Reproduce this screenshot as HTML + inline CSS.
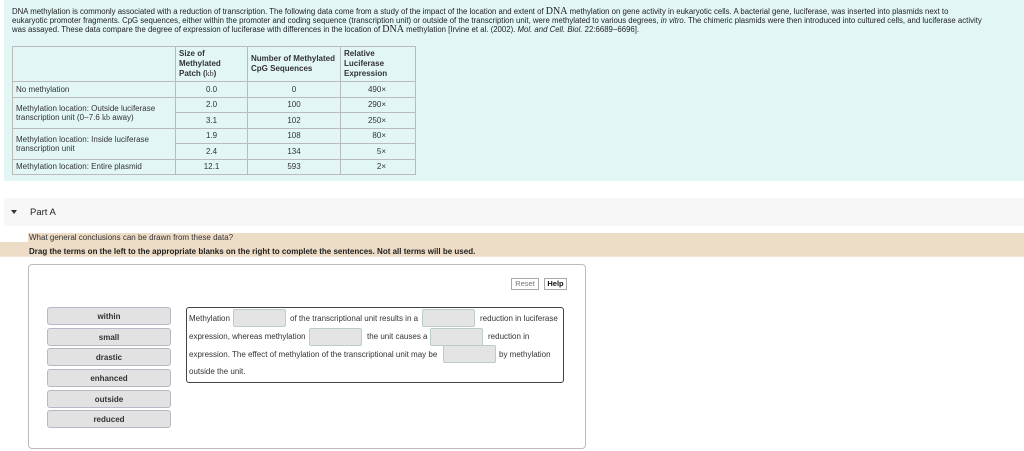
<!DOCTYPE html>
<html><head><meta charset="utf-8"><style>
*{margin:0;padding:0;box-sizing:border-box}
body{width:1024px;height:451px;background:#fff;font-family:"Liberation Sans",Arial,sans-serif;color:#333;position:relative;overflow:hidden}
.a{position:absolute;white-space:nowrap}
.t{font-size:7.8px;line-height:9px;color:#222}
table{position:absolute;left:12px;top:46px;width:404px;border-collapse:collapse;border:1px solid #555;font-size:8px;color:#333;background:#e2f6f6}
td{border:1px solid #bbb;padding:0 3px;height:15.5px;white-space:nowrap}
th{border:1px solid #bbb;text-align:left;font-weight:bold;padding:2px 3px;line-height:10px;height:33px;vertical-align:middle;white-space:nowrap}
.c{text-align:center}
.r{text-align:right;padding-right:29px}
.btn{position:absolute;left:47px;width:124px;height:18px;background:#e2e2e2;border:1px solid #b8b8c4;border-radius:3px;font-size:8px;font-weight:bold;text-align:center;line-height:17px;color:#333}
.bl{position:absolute;width:53px;height:18px;background:#e4e4e4;border:1px solid #bcc;border-radius:2px}
.s{position:absolute;font-size:8px;color:#333;white-space:nowrap}
</style></head><body>
<div class="a" style="left:4px;top:0;width:1020px;height:181px;background:#e2f6f6"></div>
<div class="a t" style="left:12px;top:7px">DNA methylation is commonly associated with a reduction of transcription. The following data come from a study of the impact of the location and extent of <span style="font-family:'Liberation Serif';font-size:10px">DNA</span> methylation on gene activity in eukaryotic cells. A bacterial gene, luciferase, was inserted into plasmids next to</div>
<div class="a t" style="left:12px;top:16px">eukaryotic promoter fragments. CpG sequences, either within the promoter and coding sequence (transcription unit) or outside of the transcription unit, were methylated to various degrees, <i>in vitro</i>. The chimeric plasmids were then introduced into cultured cells, and luciferase activity</div>
<div class="a t" style="left:12px;top:25px">was assayed. These data compare the degree of expression of luciferase with differences in the location of <span style="font-family:'Liberation Serif';font-size:10px">DNA</span> methylation [Irvine et al. (2002). <i>Mol. and Cell. Biol.</i> 22:6689−6696].</div>
<table>
<tr><th style="width:163px"></th><th style="width:72px">Size of<br>Methylated<br>Patch (<span style="font-family:'Liberation Serif';font-weight:normal">kb</span>)</th><th style="width:93px">Number of Methylated<br>CpG Sequences</th><th>Relative<br>Luciferase<br>Expression</th></tr>
<tr><td>No methylation</td><td class="c">0.0</td><td class="c">0</td><td class="r">490×</td></tr>
<tr><td rowspan="2">Methylation location: Outside luciferase<br>transcription unit (0−7.6 <span style="font-family:'Liberation Serif'">kb</span> away)</td><td class="c">2.0</td><td class="c">100</td><td class="r">290×</td></tr>
<tr><td class="c">3.1</td><td class="c">102</td><td class="r">250×</td></tr>
<tr><td rowspan="2">Methylation location: Inside luciferase<br>transcription unit</td><td class="c">1.9</td><td class="c">108</td><td class="r">80×</td></tr>
<tr><td class="c">2.4</td><td class="c">134</td><td class="r">5×</td></tr>
<tr><td>Methylation location: Entire plasmid</td><td class="c">12.1</td><td class="c">593</td><td class="r">2×</td></tr>
</table>
<div class="a" style="left:4px;top:198px;width:1020px;height:28px;background:#f7f7f7"></div>
<div class="a" style="left:11px;top:210px;width:0;height:0;border-left:3px solid transparent;border-right:3px solid transparent;border-top:4px solid #333"></div>
<div class="a" style="left:30px;top:207px;font-size:9.5px;color:#222">Part A</div>
<div class="a" style="left:28px;top:233px;width:996px;height:9px;background:#eddcc6"></div>
<div class="a" style="left:0;top:242px;width:1024px;height:15px;background:#eddcc6;border-bottom:1px solid #f3e6d4"></div>
<div class="a" style="left:29px;top:233px;font-size:8px;color:#333">What general conclusions can be drawn from these data?</div>
<div class="a" style="left:29px;top:247px;font-size:8px;font-weight:bold;color:#222">Drag the terms on the left to the appropriate blanks on the right to complete the sentences. Not all terms will be used.</div>
<div class="a" style="left:28px;top:264px;width:558px;height:185px;border:1px solid #bbb;border-radius:4px"></div>
<div class="a" style="left:511px;top:278px;width:28px;height:12px;border:1px solid #aaa;font-size:7.5px;color:#777;text-align:center;line-height:10px">Reset</div>
<div class="a" style="left:544px;top:278px;width:23px;height:12px;border:1px solid #aaa;font-size:7.5px;font-weight:bold;color:#111;text-align:center;line-height:10px">Help</div>
<div class="btn" style="top:307px">within</div>
<div class="btn" style="top:328px">small</div>
<div class="btn" style="top:348px">drastic</div>
<div class="btn" style="top:369px">enhanced</div>
<div class="btn" style="top:390px">outside</div>
<div class="btn" style="top:410px">reduced</div>
<div class="a" style="left:186px;top:307px;width:378px;height:76px;border:1px solid #444;border-radius:3px"></div>
<div class="bl" style="left:233px;top:309px"></div>
<div class="bl" style="left:422px;top:309px"></div>
<div class="bl" style="left:309px;top:328px"></div>
<div class="bl" style="left:430px;top:328px"></div>
<div class="bl" style="left:443px;top:345px"></div>
<div class="s" style="left:189px;top:314px">Methylation</div>
<div class="s" style="left:290px;top:314px">of the transcriptional unit results in a</div>
<div class="s" style="left:480px;top:314px">reduction in luciferase</div>
<div class="s" style="left:189px;top:332px">expression, whereas methylation</div>
<div class="s" style="left:367px;top:332px">the unit causes a</div>
<div class="s" style="left:488px;top:332px">reduction in</div>
<div class="s" style="left:189px;top:350px">expression. The effect of methylation of the transcriptional unit may be</div>
<div class="s" style="left:499px;top:350px">by methylation</div>
<div class="s" style="left:189px;top:367px">outside the unit.</div>
</body></html>
